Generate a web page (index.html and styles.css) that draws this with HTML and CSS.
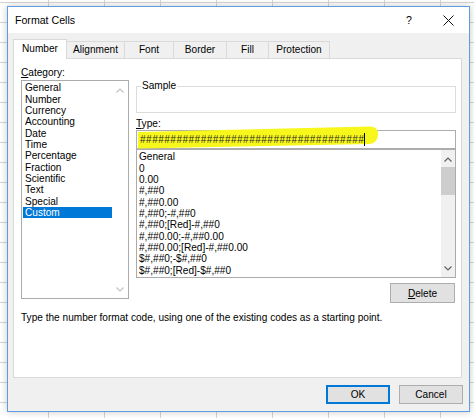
FILE: index.html
```html
<!DOCTYPE html>
<html lang="en">
<head>
<meta charset="utf-8">
<title>Format Cells</title>
<link rel="stylesheet" href="styles.css">
</head>
<body>
<div class="dialog">
  <div class="titlebar">
    <span class="title">Format Cells</span>
    <span class="help">?</span>
    <svg class="close" width="11" height="11" viewBox="0 0 11 11"><path d="M0.5 0.5 L10.5 10.5 M10.5 0.5 L0.5 10.5"/></svg>
  </div>
  <div class="content">
    <div class="tabs">
      <div class="tab active t-number">Number</div>
      <div class="tab t-align">Alignment</div>
      <div class="tab t-font">Font</div>
      <div class="tab t-border">Border</div>
      <div class="tab t-fill">Fill</div>
      <div class="tab t-prot">Protection</div>
    </div>
    <div class="panel">
      <div class="cols">
        <div class="leftcol">
          <div class="label"><u>C</u>ategory:</div>
          <div class="listbox catlist">
            <ul class="items">
              <li>General</li>
              <li>Number</li>
              <li>Currency</li>
              <li>Accounting</li>
              <li>Date</li>
              <li>Time</li>
              <li>Percentage</li>
              <li>Fraction</li>
              <li>Scientific</li>
              <li>Text</li>
              <li>Special</li>
              <li class="selected">Custom</li>
            </ul>
            <div class="vscroll disabled">
              <div class="sbtn"><svg width="8" height="5" viewBox="0 0 8 5"><polyline points="0.5,4.5 4,1 7.5,4.5"/></svg></div>
              <div class="track"></div>
              <div class="sbtn"><svg width="8" height="5" viewBox="0 0 8 5"><polyline points="0.5,0.5 4,4 7.5,0.5"/></svg></div>
            </div>
          </div>
        </div>
        <div class="rightcol">
          <fieldset class="sample"><legend>Sample</legend></fieldset>
          <div class="label type-label"><u>T</u>ype:</div>
          <div class="typebox">
            <svg class="marker" width="250" height="26" viewBox="0 0 250 26"><path d="M1,7 L233,1.5 Q241,1.5 241,9 Q241,17.5 233,19 L1,23.5 Z"/></svg>
            <span class="typetext">#####################################</span><span class="caret"></span>
          </div>
          <div class="listbox fmtlist">
            <ul class="items">
              <li>General</li>
              <li>0</li>
              <li>0.00</li>
              <li>#,##0</li>
              <li>#,##0.00</li>
              <li>#,##0;-#,##0</li>
              <li>#,##0;[Red]-#,##0</li>
              <li>#,##0.00;-#,##0.00</li>
              <li>#,##0.00;[Red]-#,##0.00</li>
              <li>$#,##0;-$#,##0</li>
              <li>$#,##0;[Red]-$#,##0</li>
            </ul>
            <div class="vscroll">
              <div class="sbtn"><svg width="8" height="5" viewBox="0 0 8 5"><polyline points="0.5,4.5 4,1 7.5,4.5"/></svg></div>
              <div class="thumb"></div>
              <div class="track"></div>
              <div class="sbtn"><svg width="8" height="5" viewBox="0 0 8 5"><polyline points="0.5,0.5 4,4 7.5,0.5"/></svg></div>
            </div>
          </div>
          <div class="delrow"><button class="btn del"><u>D</u>elete</button></div>
        </div>
      </div>
      <p class="desc">Type the number format code, using one of the existing codes as a starting point.</p>
    </div>
    <div class="footer">
      <button class="btn ok">OK</button>
      <button class="btn">Cancel</button>
    </div>
  </div>
</div>
</body>
</html>
```

FILE: styles.css
```css
* { box-sizing: border-box; }
html, body { margin: 0; }
body {
  width: 474px;
  height: 418px;
  overflow: hidden;
  padding: 6px 0 0 7px;
  background-color: #fff;
  background-image:
    linear-gradient(to right, #d4d4d4 1px, transparent 1px),
    linear-gradient(to bottom, #d4d4d4 1px, transparent 1px);
  background-size: 56px 20px, 56px 20px;
  background-position: 48px 0, 0 2px;
  font-family: "Liberation Sans", Arial, sans-serif;
  font-size: 10.1px;
  color: #000;
}

.dialog {
  width: 463px;
  height: 406px;
  border: 1px solid #5d9ee0;
  background: #f0f0f0;
  box-shadow: 0 0 7px rgba(0, 0, 0, 0.22);
  display: flex;
  flex-direction: column;
}

.titlebar {
  flex: none;
  height: 26px;
  background: #fff;
  display: flex;
  align-items: center;
  padding: 0 15px 0 7px;
}
.title { font-size: 10.6px; }
.help { margin-left: auto; margin-right: 31px; font-size: 10.6px; }
.close { fill: none; stroke: #111; stroke-width: 1; }

.content {
  flex: 1;
  padding: 6px 7px 0 5px;
  display: flex;
  flex-direction: column;
}

.tabs {
  height: 19px;
  display: flex;
  align-items: flex-end;
}
.tab {
  height: 17px;
  border: 1px solid #d9d9d9;
  border-bottom: none;
  margin-right: -1px;
  background: #f0f0f0;
  display: flex;
  align-items: center;
  justify-content: center;
  padding-bottom: 1px;
}
.tab.active {
  height: 20px;
  margin-bottom: -1px;
  background: #fff;
  position: relative;
  z-index: 1;
  padding-bottom: 2px;
}
.t-number { width: 54px; }
.t-align { width: 59px; }
.t-font { width: 50px; }
.t-border { width: 54px; }
.t-fill { width: 43px; }
.t-prot { width: 62px; }

.panel {
  height: 320px;
  border: 1px solid #d9d9d9;
  background: #fff;
  padding: 8px 4px 0 7px;
}

.cols { display: flex; gap: 7px; }
.leftcol { width: 108px; }
.rightcol { width: 320px; }

.label { height: 12px; line-height: 12px; }

.listbox {
  border: 1px solid #ababab;
  background: #fff;
  display: flex;
}
.catlist { margin-top: 1px; height: 219px; }
.fmtlist { height: 129px; }

.items {
  list-style: none;
  margin: 0;
  flex: 1;
  min-width: 0;
  overflow: hidden;
}
.items li {
  line-height: 11.33px;
  height: 11.33px;
  white-space: nowrap;
}
.catlist .items { padding: 1.3px 0 0 1px; }
.catlist .items li { padding-left: 2px; }
.catlist .items li.selected { background: #0078d7; color: #fff; }
.fmtlist .items { padding: 1.3px 0 0 2px; }

.vscroll {
  display: flex;
  flex-direction: column;
  width: 14px;
  background: #f0f0f0;
}
.vscroll .track { flex: 1; }
.sbtn {
  height: 16px;
  display: flex;
  align-items: center;
  justify-content: center;
}
.sbtn:first-child { padding-top: 2px; }
.sbtn:last-child { padding-bottom: 1px; }
.sbtn svg { fill: none; stroke: #606060; stroke-width: 1.2; }
.thumb { height: 28px; margin-top: 1px; background: #cdcdcd; }
.vscroll.disabled { width: 16px; background: #fff; }
.vscroll.disabled .sbtn svg { stroke: #c4c4c4; }

.sample {
  margin: 13px 0 0 0;
  height: 33px;
  padding: 0 0 0 4px;
  border: 1px solid #dcdcdc;
  min-width: 0;
}
.sample legend {
  padding: 0 1px;
  line-height: 12px;
  height: 12px;
}
.type-label { margin-top: 5px; }

.typebox {
  position: relative;
  height: 19px;
  border: 1px solid #adadad;
  padding-left: 3px;
  display: flex;
  align-items: center;
}
.marker {
  position: absolute;
  left: 0;
  top: -6px;
  fill: #f7f71c;
  filter: blur(0.5px);
}
.typetext {
  position: relative;
  color: #2a2a2a;
  letter-spacing: 0.45px;
}
.caret {
  position: relative;
  display: inline-block;
  width: 1px;
  height: 13px;
  background: #000;
  margin-left: 0;
}

.delrow { display: flex; justify-content: flex-end; margin-top: 5px; padding-right: 1px; }

.btn {
  font: inherit;
  color: #000;
  background: #e1e1e1;
  border: 1px solid #adadad;
  padding: 0;
  width: 64px;
  height: 19px;
}
.btn.del { width: 65px; height: 20px; }
.btn.ok { border: 2px solid #0078d7; }

.desc { margin: 9px 0 0 0; line-height: 12px; }

.footer {
  display: flex;
  justify-content: flex-end;
  gap: 9px;
  margin: 7px -1px 0 0;
}
```
